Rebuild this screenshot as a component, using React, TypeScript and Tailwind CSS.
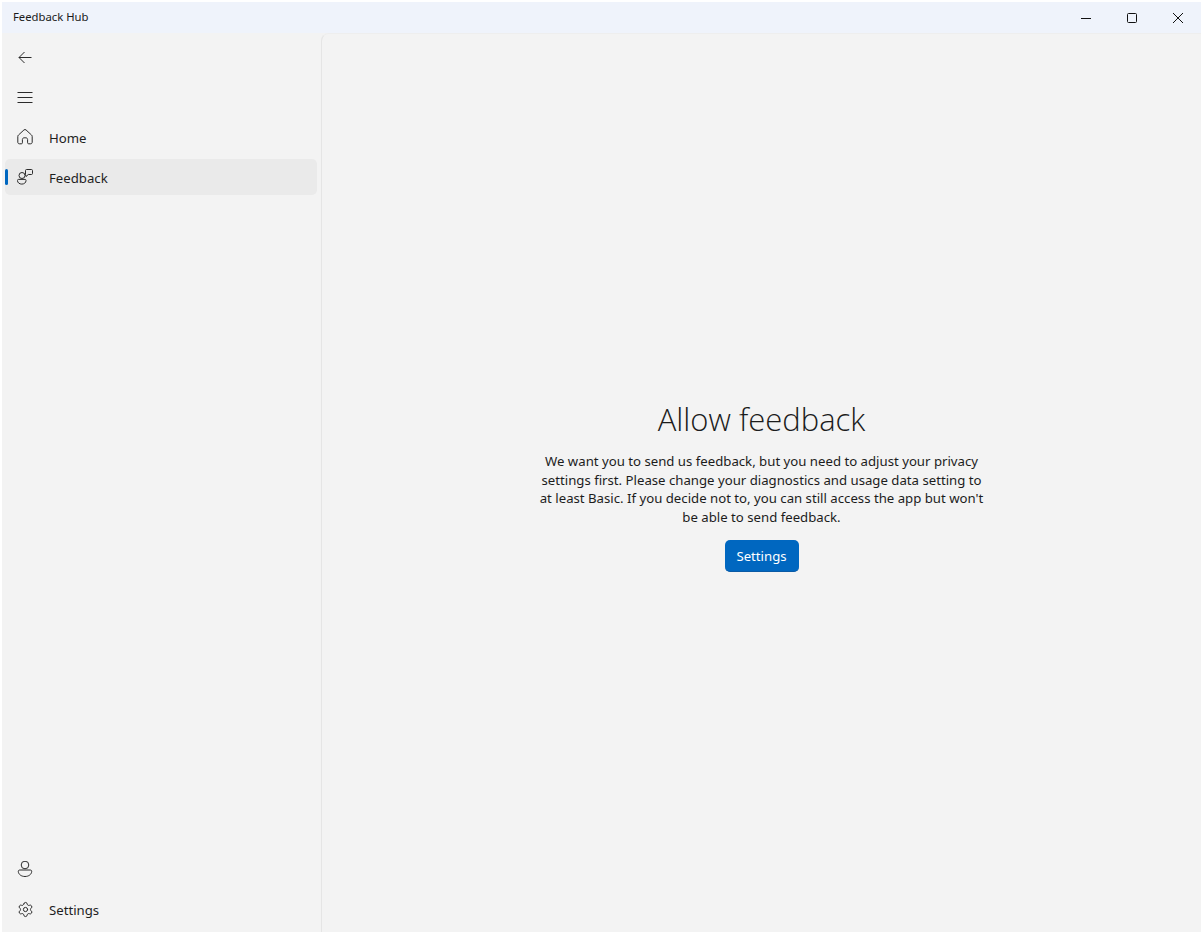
import { Settings } from "lucide-react";

const iconClass = "h-4 w-4 text-[#2b2b2b]";

function BackIcon() {
  return (
    <svg viewBox="0 0 16 16" className={iconClass} fill="none" stroke="currentColor" strokeWidth="1">
      <path d="M14.500 8.500H2M7.500 3 2 8.500 7.500 14" />
    </svg>
  );
}

function MenuIcon() {
  return (
    <svg viewBox="0 0 16 16" className={iconClass} fill="none" stroke="currentColor" strokeWidth="1">
      <path d="M0.500 3.500H15.500M0.500 8.500H15.500M0.500 13.500H15.500" />
    </svg>
  );
}

function HomeIcon() {
  return (
    <svg viewBox="0 0 16 16" className={iconClass} fill="none" stroke="currentColor" strokeWidth="1">
      <path d="M6.900 1 1.500 6a2 2 0 0 0-.7 1.500v5.700c0 1 .7 1.600 1.500 1.600h2.100c.6 0 1-.4 1-1v-3.300c0-1 .8-1.700 1.700-1.700h1.800c.9 0 1.700.7 1.700 1.700v3.300c0 .6.4 1 1 1h2.100c.8 0 1.500-.6 1.500-1.600V7.500a2 2 0 0 0-.7-1.500L9.100 1a1.600 1.600 0 0 0-2.200 0Z" />
    </svg>
  );
}

function FeedbackIcon() {
  return (
    <svg viewBox="0 0 16 16" className={iconClass} fill="none" stroke="currentColor" strokeWidth="1">
      <circle cx="5" cy="6.500" r="3" />
      <path d="M.5 11.300c0-.5.400-.9.900-.9h6.700c.5 0 .9.400.9.900v.4c0 2-1.900 3.400-4.200 3.400S.5 13.700.5 11.700v-.4Z" />
      <path d="M8.500 1.500c0-.6.400-1 1-1h5c.6 0 1 .4 1 1v3c0 .6-.4 1-1 1h-3.200L9 7.500l-.5-2V1.500Z" />
    </svg>
  );
}

function PersonIcon() {
  return (
    <svg viewBox="0 0 16 16" className={iconClass} fill="none" stroke="currentColor" strokeWidth="1">
      <circle cx="8" cy="4" r="3.800" />
      <path d="M1.300 10.300c0-.7.600-1.300 1.300-1.300h10.800c.7 0 1.300.6 1.300 1.300 0 3-3 5.200-6.700 5.200s-6.700-2.200-6.700-5.200Z" />
    </svg>
  );
}

function NavItem({ icon, label, active }: { icon: React.ReactNode; label?: string; active?: boolean }) {
  return (
    <div className={`relative mx-[3px] flex h-9 w-[312px] items-center gap-4 rounded-[5px] pl-[12px] ${active ? "bg-[#eaeaea]" : ""}`}>
      {active && <span className="absolute left-0 top-[10px] h-4 w-[3px] rounded-full bg-[#0067c0]" />}
      {icon}
      {label && <span className="pt-[4px] text-[13.200px] text-[#1f1f1f]">{label}</span>}
    </div>
  );
}

export default function App() {
  return (
    <div className="h-[934px] w-[1203px] bg-white p-[2px] font-['Noto_Sans',sans-serif]">
      <div className="flex h-[930px] w-[1199px] flex-col bg-[#f3f3f3]">
        <header className="flex h-[31px] items-center justify-between bg-[#eff3fb]">
          <span className="pl-[11px] text-[11.300px] text-[#1a1a1a]">Feedback Hub</span>
          <div className="flex items-center">
            <div className="flex h-[31px] w-[46px] items-center justify-center">
              <svg viewBox="0 0 10 10" className="h-[10px] w-[10px] text-[#111]" fill="none" stroke="currentColor"><path d="M0 5.500H10" /></svg>
            </div>
            <div className="flex h-[31px] w-[46px] items-center justify-center">
              <svg viewBox="0 0 10 10" className="h-[10px] w-[10px] text-[#111]" fill="none" stroke="currentColor"><rect x=".5" y=".5" width="9" height="9" rx="1" /></svg>
            </div>
            <div className="flex h-[31px] w-[46px] items-center justify-center">
              <svg viewBox="0 0 10 10" className="h-[10px] w-[10px] text-[#111]" fill="none" stroke="currentColor"><path d="M0 0 10 10M10 0 0 10" /></svg>
            </div>
          </div>
        </header>
        <div className="flex min-h-0 flex-1">
          <aside className="flex w-[319px] flex-col justify-between pb-[5px] pt-[6px]">
            <nav className="flex flex-col gap-1">
              <NavItem icon={<BackIcon />} />
              <NavItem icon={<MenuIcon />} />
              <NavItem icon={<HomeIcon />} label="Home" />
              <NavItem icon={<FeedbackIcon />} label="Feedback" active />
            </nav>
            <nav className="flex flex-col gap-1">
              <NavItem icon={<PersonIcon />} />
              <NavItem icon={<Settings className="-mx-[0.5px] h-[17px] w-[17px] text-[#2b2b2b]" strokeWidth={1.4} />} label="Settings" />
            </nav>
          </aside>
          <main className="flex flex-1 flex-col items-center justify-center rounded-tl-lg border-l border-t border-l-[#e5e5e5] border-t-[#eeeeee] bg-[#f3f3f3] pt-[6px]">
            <h1 className="font-['Open_Sans',sans-serif] text-[31px] font-light leading-[38px] text-[#1c1c1c]">Allow feedback</h1>
            <p className="mt-[14px] w-[450px] text-center text-[13.200px] leading-[18.500px] text-[#1c1c1c]">
              We want you to send us feedback, but you need to adjust your privacy settings first. Please change your diagnostics and usage data setting to at least Basic. If you decide not to, you can still access the app but won't be able to send feedback.
            </p>
            <button className="mt-[14px] flex h-8 w-[74px] items-center justify-center rounded-[5px] border-b border-[#0a5aa5] bg-[#0067c0] pt-[2px] text-[13.200px] text-white">
              Settings
            </button>
          </main>
        </div>
      </div>
    </div>
  );
}
